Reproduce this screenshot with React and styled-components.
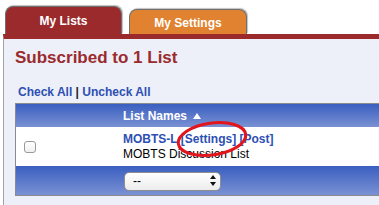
import React from 'react';
import styled, { createGlobalStyle } from 'styled-components';

const GlobalStyle = createGlobalStyle`
  html, body {
    margin: 0;
    padding: 0;
    background: #ffffff;
    overflow: hidden;
  }
  body {
    font-family: "Liberation Sans", Arial, Helvetica, sans-serif;
  }
`;

const Page = styled.div`
  width: 379px;
  height: 205px;
  padding: 6px 0 0 3px;
  box-sizing: border-box;
  overflow: hidden;
`;

const TabRow = styled.div`
  display: flex;
  align-items: flex-end;
  padding-left: 2px;
  height: 28px;
`;

const Tab = styled.div`
  box-sizing: border-box;
  width: ${(p) => p.$width}px;
  height: ${(p) => p.$height}px;
  margin-left: ${(p) => p.$offset || 0}px;
  background: ${(p) => p.$color};
  border: 1px solid #6f6f6f;
  border-bottom: none;
  border-radius: 8px 8px 0 0;
  box-shadow: 1px -1px 1px rgba(0, 0, 0, 0.25);
  display: flex;
  align-items: center;
  justify-content: center;
  color: #ffffff;
  font-size: 12px;
  font-weight: bold;
  padding-top: 1px;
`;

const Panel = styled.div`
  border-top: 5px solid #9a2a2b;
  border-left: 1px solid #a3a3a3;
  background: #edf0f8;
  padding: 9px 0 0 11px;
  width: 420px;
  height: 200px;
`;

const Heading = styled.h2`
  margin: 0;
  font-size: 17px;
  line-height: 20px;
  font-weight: bold;
  color: #9a2a2e;
`;

const CheckLinks = styled.div`
  margin: 17px 0 3px 3px;
  font-size: 12px;
  line-height: 15px;
  font-weight: bold;
  color: #222;
`;

const Link = styled.a`
  color: #2e4fb3;
  text-decoration: none;
  cursor: pointer;
`;

const Table = styled.div`
  width: 400px;
  border-top: 1px solid #8a8a8a;
  border-left: 1px solid #8a8a8a;
  border-bottom: 1px solid #8a8a8a;
`;

const Row = styled.div`
  display: grid;
  grid-template-columns: 107px 1fr;
  align-items: center;
  height: ${(p) => p.$height}px;
  background: ${(p) =>
    p.$blue ? 'linear-gradient(#3a5fc0, #7a91d3)' : '#ffffff'};
`;

const HeaderLabel = styled.div`
  color: #ffffff;
  font-size: 12px;
  font-weight: bold;
  display: flex;
  align-items: center;
  gap: 6px;
`;

const CheckCell = styled.div`
  padding-left: 8px;
  display: flex;
  align-items: center;
`;

const Checkbox = styled.input`
  appearance: none;
  margin: 0;
  width: 12px;
  height: 12px;
  border: 1px solid #9a9a9a;
  border-radius: 3px;
  background: linear-gradient(#ffffff, #f0f0f0);
  box-sizing: border-box;
`;

const NameCell = styled.div`
  font-size: 12px;
  line-height: 15px;
  color: #000;
`;

const ListLinks = styled.div`
  font-weight: bold;
  color: #2e4fb3;
`;

const Circled = styled.span`
  position: relative;
`;

const Scribble = styled.svg`
  position: absolute;
  left: -6px;
  top: -10px;
  width: 72px;
  height: 36px;
  overflow: visible;
  pointer-events: none;
`;

const SelectWrap = styled.div`
  position: relative;
  width: 97px;
  height: 19px;
  margin-left: 1px;
`;

const Select = styled.select`
  appearance: none;
  width: 100%;
  height: 100%;
  margin: 0;
  box-sizing: border-box;
  border: 1px solid #8f8f8f;
  border-radius: 5px;
  background: linear-gradient(#ffffff, #ececec);
  font-family: "Liberation Sans", Arial, sans-serif;
  font-size: 12px;
  padding: 0 0 0 8px;
  color: #000;
`;

const Arrows = styled.svg`
  position: absolute;
  right: 5px;
  top: 4px;
  pointer-events: none;
`;

export default function App() {
  return (
    <>
      <GlobalStyle />
      <Page>
        <TabRow>
          <Tab $width={117} $height={28} $color="#9a2a2b">My Lists</Tab>
          <Tab $width={118} $height={25} $color="#e0822f" $offset={7}>My Settings</Tab>
        </TabRow>
        <Panel>
          <Heading>Subscribed to 1 List</Heading>
          <CheckLinks>
            <Link>Check All</Link> | <Link>Uncheck All</Link>
          </CheckLinks>
          <Table>
            <Row $blue $height={23}>
              <div />
              <HeaderLabel>
                List Names
                <svg width="8" height="6" viewBox="0 0 8 6">
                  <path d="M4 0 L8 6 L0 6 Z" fill="#ffffff" />
                </svg>
              </HeaderLabel>
            </Row>
            <Row $height={39}>
              <CheckCell>
                <Checkbox type="checkbox" />
              </CheckCell>
              <NameCell>
                <ListLinks>
                  MOBTS-L{' '}
                  <Circled>
                    [Settings]
                    <Scribble viewBox="0 0 72 36">
                      <ellipse
                        cx="37"
                        cy="17"
                        rx="34"
                        ry="16"
                        fill="none"
                        stroke="#e2141c"
                        strokeWidth="3"
                        transform="rotate(-8 37 17)"
                      />
                    </Scribble>
                  </Circled>{' '}
                  [Post]
                </ListLinks>
                <div>MOBTS Discussion List</div>
              </NameCell>
            </Row>
            <Row $blue $height={29}>
              <div />
              <SelectWrap>
                <Select defaultValue="--">
                  <option>--</option>
                </Select>
                <Arrows width="6" height="11" viewBox="0 0 6 11">
                  <path d="M3 0 L6 4 L0 4 Z M3 11 L6 7 L0 7 Z" fill="#111" />
                </Arrows>
              </SelectWrap>
            </Row>
          </Table>
        </Panel>
      </Page>
    </>
  );
}
